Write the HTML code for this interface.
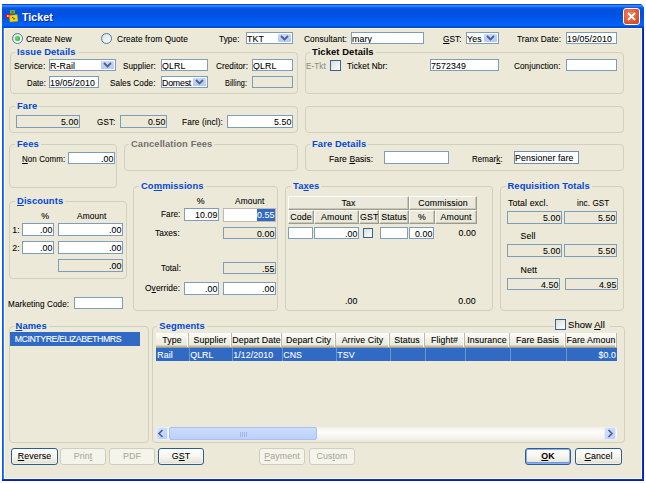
<!DOCTYPE html>
<html><head><meta charset="utf-8"><style>
html,body{margin:0;padding:0;background:#fff;width:646px;height:483px;overflow:hidden}
body{position:relative;font-family:"Liberation Sans",sans-serif;font-size:8.8px;color:#000;letter-spacing:0.1px;-webkit-text-stroke:0.08px currentColor}
u{text-decoration:underline;text-underline-offset:1px}
.win{position:absolute;left:2px;top:4px;width:642px;height:477px;background:#0a5cf0;border-radius:1px 5px 0 0}
.title{position:absolute;left:0;top:0;width:642px;height:24px;border-radius:1px 5px 0 0;
 background:linear-gradient(#0a48d2 0px,#0a48d2 0.8px,#3d8ef9 1px,#2a7cf6 2.5px,#0d62ee 3.5px,#0152e0 5px,#0050df 9px,#0056e8 14px,#005df2 18px,#0064fa 21px,#0060f6 22px,#0044cc 23px,#0a48d4 24px)}
.client{position:absolute;left:2px;top:24px;width:638px;height:451px;background:#ece9d8;box-shadow:inset 1px 0 #fffbf0,inset 0 -1px #fff8e4,inset -1px 0 #fff8e4,inset 0 1px #fbf6e2}
.lbord{position:absolute;left:0;top:24px;width:2px;height:453px;background:linear-gradient(90deg,#0a4ee0,#1d6cf7 60%,#5e97f5)}
.rbord{position:absolute;left:640px;top:24px;width:2px;height:453px;background:linear-gradient(90deg,#0a3ed0,#0018a0)}
.bbord{position:absolute;left:0;top:475px;width:642px;height:2px;background:linear-gradient(#0a40d2,#0018a0)}
.ttl{position:absolute;left:20px;top:7px;font-weight:bold;font-size:10.5px;color:#fff;text-shadow:1px 1px #0a1e8c}
.close{position:absolute;left:621px;top:4px;width:14.5px;height:14.5px;border:1px solid #fff;border-radius:3px;
 background:radial-gradient(circle at 40% 35%,#f08a6a,#e0562c 60%,#c9401a)}
.t{position:absolute;white-space:nowrap;line-height:11px}
.lg{position:absolute;white-space:nowrap;line-height:11px;font-weight:bold;font-size:9.4px;background:#ece9d8;padding:0 2px;-webkit-text-stroke:0;}
.grp{position:absolute;box-sizing:border-box;border:1px solid #d0d0bf;border-radius:4px}
.inp{position:absolute;box-sizing:border-box;border:1px solid #7f9db9;background:#fff;overflow:hidden}
.inp.dis{background:#ece9d8}
.inp.foc{border-color:#6a8bb3}
.v{position:absolute;top:calc(50% + 0.6px);transform:translateY(-50%);line-height:11px;white-space:nowrap}
.v.left{left:0px}
.v.right{right:0.6px}
.sel{background:#316ac5;color:#fff;padding-left:1px}
.inp.foc2{border:0}
.inp.foc2 .v{top:1px;bottom:1px;transform:none;right:1.5px}
.inp.foc2 .sel{display:block;height:100%;line-height:12px;width:17px;overflow:hidden;text-align:right;direction:rtl}
.cb .dd{position:absolute;right:1px;top:1px;bottom:1px;width:13px;background:linear-gradient(#c8d8fc,#b4c8f8);border-radius:1px;display:flex;align-items:center;justify-content:center}
.chk{position:absolute;box-sizing:border-box;border:1px solid #33649a;background:linear-gradient(135deg,#dcdcd7,#fff)}
.rad{position:absolute;width:11px;height:11px;box-sizing:border-box;border:1px solid #4d7aa8;border-radius:50%;background:linear-gradient(135deg,#dcdcd7,#fff)}
.rad .dot{position:absolute;left:2px;top:2px;width:5px;height:5px;border-radius:50%;background:radial-gradient(circle at 40% 40%,#6fe06f,#21a121)}
.hd{position:absolute;box-sizing:border-box;background:#ebe9db;border-top:1px solid #fff;border-left:1px solid #fff;border-right:1px solid #9d9b8e;border-bottom:1px solid #9d9b8e;box-shadow:inset -1px -1px #cbc8b8;text-align:center;line-height:12.5px;white-space:nowrap;overflow:hidden}
.lh{position:absolute;box-sizing:border-box;background:linear-gradient(#fdfdf9,#f1f0e6 50%,#ebe9dc);border-right:1px solid #bdbaa6;border-bottom:1px solid #a19e8b;box-shadow:inset -1px 0 #fff, inset 0 -1px #bdb9a6, inset 0 -2px #d6d3c1;text-align:center;line-height:14px;white-space:nowrap;overflow:hidden}
.selrow{position:absolute;background:#316ac5;color:#fff;white-space:nowrap;line-height:11px}
.cell{position:absolute;color:#fff;line-height:14px;white-space:nowrap}
.gl{position:absolute;width:1px;background:#6f93d2}
.sbtrack{position:absolute;background:linear-gradient(#f3f1ec,#fefefb 40%,#f0efe7)}
.sbbtn{position:absolute;box-sizing:border-box;background:linear-gradient(135deg,#d6e2fd,#b8cdf9);border:1px solid #e6eefc;border-radius:2px}
.sbthumb{position:absolute;box-sizing:border-box;background:linear-gradient(#cddcfd,#bcd0fa);border:1px solid #a9c0f2;border-radius:2px}
.btn{position:absolute;box-sizing:border-box;border:1px solid #2d5d8e;border-radius:3px;background:linear-gradient(#fff,#f6f5ee 50%,#e9e7dc 85%,#d8d4c4);box-shadow:inset 0 0 0 1px rgba(255,255,255,0.6);text-align:center;line-height:14.5px;white-space:nowrap}
.btn.dis{border-color:#cfcdbf;color:#aca899;background:#f5f4ea;box-shadow:none}
</style></head><body>
<div class="win">
 <div class="title"></div>
 <svg style="position:absolute;left:3px;top:6px" width="14" height="13" viewBox="0 0 14 13">
  <rect x="5" y="0" width="5" height="3.6" fill="#5cb83a"/><circle cx="7.6" cy="1.8" r="0.9" fill="#d02020"/>
  <rect x="0.5" y="3.9" width="6" height="4.6" fill="#d8141e"/><rect x="2" y="5" width="1.6" height="2" fill="#f4d0d0"/>
  <g transform="rotate(-6 8.5 8.3)"><rect x="4.6" y="5" width="8" height="6.6" fill="#ffd800" stroke="#b89a00" stroke-width="0.4"/><path d="M7 7.5h1.5 M8 9h2" stroke="#333" stroke-width="1"/></g>
 </svg>
 <div class="ttl">Ticket</div>
 <div class="close"><svg width="15" height="15" viewBox="0 0 15 15" style="position:absolute;left:0;top:0"><path d="M4 4 L11 11 M11 4 L4 11" stroke="#fff" stroke-width="1.8"/></svg></div>
 <div class="lbord"></div><div class="rbord"></div><div class="bbord"></div>
 <div class="client"></div>
</div>
<div class="rad" style="left:12px;top:33px"><div class="dot"></div></div>
<div class="t " id="L1" style="top:34px;left:26.4px;transform-origin:0 0;transform:scaleX(0.9618);"><span>Create New</span></div>
<div class="rad" style="left:101px;top:33px"></div>
<div class="t " id="L2" style="top:34px;left:116.79px;transform-origin:0 0;transform:scaleX(0.9515);"><span>Create from Quote</span></div>
<div class="t " id="L3" style="top:34px;left:219.49px;transform-origin:0 0;transform:scaleX(0.9334);"><span>Type:</span></div>
<div class="inp cb" style="left:246px;top:32px;width:47px;height:12px;"><span class="v left">TKT</span><div class="dd"><svg width="9" height="6" viewBox="0 0 9 6"><path d="M1 1 L4.5 4.5 L8 1" stroke="#4d6185" stroke-width="1.8" fill="none"/></svg></div></div>
<div class="t " id="L4" style="top:34px;left:303.79px;transform-origin:0 0;transform:scaleX(0.9422);"><span>Consultant:</span></div>
<div class="inp" style="left:351px;top:32px;width:73px;height:12px;"><span class="v left">mary</span></div>
<div class="t " id="L5" style="top:34px;left:442.65px;transform-origin:0 0;transform:scaleX(0.9319);"><span><u>G</u>ST:</span></div>
<div class="inp cb" style="left:466px;top:32px;width:33px;height:12px;"><span class="v left">Yes</span><div class="dd"><svg width="9" height="6" viewBox="0 0 9 6"><path d="M1 1 L4.5 4.5 L8 1" stroke="#4d6185" stroke-width="1.8" fill="none"/></svg></div></div>
<div class="t " id="L6" style="top:34px;left:516.79px;transform-origin:0 0;transform:scaleX(0.9435);"><span>Tranx Date:</span></div>
<div class="inp" style="left:566px;top:32px;width:51px;height:12px;"><span class="v left">19/05/2010</span></div>
<div class="grp" style="left:10px;top:52px;width:288px;height:42px;"></div>
<div class="lg" style="left:15px;top:46.4px;color:#0046d5">Issue Details</div>
<div class="t " id="L7" style="top:60.7px;left:14.2px;transform-origin:0 0;transform:scaleX(0.9625);"><span>Service:</span></div>
<div class="inp cb" style="left:49px;top:59px;width:67px;height:12px;"><span class="v left">R-Rail</span><div class="dd"><svg width="9" height="6" viewBox="0 0 9 6"><path d="M1 1 L4.5 4.5 L8 1" stroke="#4d6185" stroke-width="1.8" fill="none"/></svg></div></div>
<div class="t " id="L8" style="top:60.7px;left:123.49px;transform-origin:0 0;transform:scaleX(0.9201);"><span>Supplier:</span></div>
<div class="inp" style="left:161px;top:59px;width:47px;height:12px;"><span class="v left">QLRL</span></div>
<div class="t " id="L9" style="top:60.7px;left:215.79px;transform-origin:0 0;transform:scaleX(0.9236);"><span>Creditor:</span></div>
<div class="inp" style="left:252px;top:59px;width:41px;height:12px;"><span class="v left">QLRL</span></div>
<div class="t " id="L10" style="top:77.9px;left:26.78px;transform-origin:0 0;transform:scaleX(0.8764);"><span>Date:</span></div>
<div class="inp" style="left:49px;top:76px;width:50px;height:12px;"><span class="v left">19/05/2010</span></div>
<div class="t " id="L11" style="top:77.9px;left:110.43px;transform-origin:0 0;transform:scaleX(0.9294);"><span>Sales Code:</span></div>
<div class="inp cb" style="left:161px;top:76px;width:47px;height:12px;"><span class="v left"><span style="letter-spacing:-0.2px">Domest</span></span><div class="dd"><svg width="9" height="6" viewBox="0 0 9 6"><path d="M1 1 L4.5 4.5 L8 1" stroke="#4d6185" stroke-width="1.8" fill="none"/></svg></div></div>
<div class="t " id="L12" style="top:77.9px;left:224.78px;transform-origin:0 0;transform:scaleX(0.8241);"><span>Billing:</span></div>
<div class="inp dis" style="left:252px;top:76px;width:41px;height:12px;"><span class="v right"></span></div>
<div class="grp" style="left:305px;top:52px;width:319px;height:42px;"></div>
<div class="lg" style="left:310px;top:46.4px;color:#000">Ticket Details</div>
<div class="t " id="L13" style="top:60.7px;left:305.88px;transform-origin:0 0;transform:scaleX(0.9201);color:#8d8c84;"><span>E-Tkt</span></div>
<div class="chk" style="left:330px;top:59.5px;width:11px;height:11px"></div>
<div class="t " id="L14" style="top:60.7px;left:347.02px;transform-origin:0 0;transform:scaleX(0.9381);"><span>Ticket Nbr:</span></div>
<div class="inp" style="left:430px;top:59px;width:69px;height:12px;"><span class="v left">7572349</span></div>
<div class="t " id="L15" style="top:60.7px;left:513.79px;transform-origin:0 0;transform:scaleX(0.9280);"><span>Conjunction:</span></div>
<div class="inp" style="left:566px;top:59px;width:51px;height:12px;"><span class="v left"></span></div>
<div class="grp" style="left:9px;top:106px;width:289px;height:27px;"></div>
<div class="lg" style="left:15px;top:100.4px;color:#0046d5">Fare</div>
<div class="inp dis" style="left:16px;top:115px;width:64px;height:13px;"><span class="v right">5.00</span></div>
<div class="t " id="L16" style="top:116.5px;left:96.79px;transform-origin:0 0;transform:scaleX(0.9201);"><span>GST:</span></div>
<div class="inp dis" style="left:120px;top:115px;width:47px;height:13px;"><span class="v right">0.50</span></div>
<div class="t " id="L17" style="top:116.5px;left:182.2px;transform-origin:0 0;transform:scaleX(0.9489);"><span>Fare (incl):</span></div>
<div class="inp" style="left:227px;top:115px;width:66px;height:13px;"><span class="v right">5.50</span></div>
<div class="grp" style="left:305px;top:106px;width:319px;height:27px;"></div>
<div class="grp" style="left:9px;top:144px;width:108px;height:44px;"></div>
<div class="lg" style="left:15px;top:138.4px;color:#0046d5">Fees</div>
<div class="t " id="L18" style="top:154.2px;left:21.75px;transform-origin:0 0;transform:scaleX(0.9031);"><span><u>N</u>on Comm:</span></div>
<div class="inp" style="left:68px;top:152px;width:47px;height:12px;"><span class="v right">.00</span></div>
<div class="grp" style="left:124px;top:144px;width:174px;height:27px;"></div>
<div class="lg" style="left:129px;top:138.4px;color:#707070">Cancellation Fees</div>
<div class="grp" style="left:305px;top:144px;width:319px;height:27px;"></div>
<div class="lg" style="left:310px;top:138.4px;color:#0046d5">Fare Details</div>
<div class="t " id="L19" style="top:153.6px;left:328.9px;transform-origin:0 0;transform:scaleX(0.9689);"><span>Fare <u>B</u>asis:</span></div>
<div class="inp" style="left:384px;top:151px;width:65px;height:13px;"><span class="v right"></span></div>
<div class="t " id="L20" style="top:153.6px;left:472.34px;transform-origin:0 0;transform:scaleX(0.9030);"><span>Remar<u>k</u>:</span></div>
<div class="inp foc" style="left:514px;top:151px;width:65px;height:13px;"><span class="v left">Pensioner fare</span></div>
<div class="grp" style="left:9px;top:201px;width:118px;height:78px;"></div>
<div class="lg" style="left:15px;top:195.4px;color:#0046d5"><u>D</u>iscounts</div>
<div class="t " style="top:211.2px;left:-150.8px;width:200px;text-align:right;"><span>%</span></div>
<div class="t " id="L21" style="top:211.2px;left:76.79px;transform-origin:0 0;transform:scaleX(0.9484);"><span>Amount</span></div>
<div class="t " style="top:224.5px;left:-180.2px;width:200px;text-align:right;"><span>1:</span></div>
<div class="inp" style="left:22px;top:223px;width:32px;height:13px;"><span class="v right">.00</span></div>
<div class="inp" style="left:58px;top:223px;width:65px;height:13px;"><span class="v right">.00</span></div>
<div class="t " style="top:242.5px;left:-180.2px;width:200px;text-align:right;"><span>2:</span></div>
<div class="inp" style="left:22px;top:241px;width:32px;height:13px;"><span class="v right">.00</span></div>
<div class="inp" style="left:58px;top:241px;width:65px;height:13px;"><span class="v right">.00</span></div>
<div class="inp dis" style="left:58px;top:259px;width:65px;height:13px;"><span class="v right">.00</span></div>
<div class="t " id="L22" style="top:298.7px;left:8.46px;transform-origin:0 0;transform:scaleX(0.9256);"><span>Marketing Code:</span></div>
<div class="inp" style="left:74px;top:297px;width:49px;height:12px;"><span class="v right"></span></div>
<div class="grp" style="left:133px;top:186px;width:145px;height:125px;"></div>
<div class="lg" style="left:139px;top:180.4px;color:#0046d5">Co<u>m</u>missions</div>
<div class="t " style="top:195.7px;left:4.7px;width:200px;text-align:right;"><span>%</span></div>
<div class="t " id="L23" style="top:195.7px;left:234.79px;transform-origin:0 0;transform:scaleX(0.9484);"><span>Amount</span></div>
<div class="t " id="L24" style="top:209px;left:160.79px;transform-origin:0 0;transform:scaleX(0.9239);"><span>Fare:</span></div>
<div class="inp" style="left:184px;top:208px;width:35px;height:13px;"><span class="v right">10.09</span></div>
<div class="inp foc2" style="left:223px;top:208px;width:53px;height:14px"><span class="v right"><span class="sel">0.55</span></span><svg style="position:absolute;left:0;top:0" width="53" height="14"><rect x="0.5" y="0.5" width="52" height="13" fill="none" stroke="#7d7562" stroke-dasharray="1 1"/></svg></div>
<div class="t " id="L25" style="top:227.7px;left:154.61px;transform-origin:0 0;transform:scaleX(0.9539);"><span>Taxes:</span></div>
<div class="inp dis" style="left:223px;top:227px;width:53px;height:12px;"><span class="v right">0.00</span></div>
<div class="t " id="L26" style="top:263px;left:160.79px;transform-origin:0 0;transform:scaleX(0.9239);"><span>Total:</span></div>
<div class="inp dis" style="left:223px;top:262px;width:53px;height:12px;"><span class="v right">.55</span></div>
<div class="t " id="L27" style="top:283.4px;left:144.61px;transform-origin:0 0;transform:scaleX(0.9501);"><span>O<u>v</u>erride:</span></div>
<div class="inp" style="left:184px;top:282px;width:35px;height:13px;"><span class="v right">.00</span></div>
<div class="inp" style="left:223px;top:282px;width:53px;height:13px;"><span class="v right">.00</span></div>
<div class="grp" style="left:285px;top:186px;width:208px;height:125px;"></div>
<div class="lg" style="left:291px;top:180.4px;color:#0046d5">Ta<u>x</u>es</div>
<div class="hd" style="left:288px;top:196px;width:121px;height:14px">Tax</div>
<div class="hd" style="left:409px;top:196px;width:68px;height:14px">Commission</div>
<div class="hd" style="left:288px;top:210px;width:26px;height:14px">Code</div>
<div class="hd" style="left:314px;top:210px;width:45px;height:14px">Amount</div>
<div class="hd" style="left:359px;top:210px;width:20px;height:14px">GST</div>
<div class="hd" style="left:379px;top:210px;width:30px;height:14px">Status</div>
<div class="hd" style="left:409px;top:210px;width:26px;height:14px">%</div>
<div class="hd" style="left:435px;top:210px;width:42px;height:14px">Amount</div>
<div class="inp" style="left:288px;top:227px;width:25px;height:12px;"><span class="v right"></span></div>
<div class="inp" style="left:314px;top:227px;width:45px;height:12px;"><span class="v right">.00</span></div>
<div class="chk" style="left:363px;top:228px;width:10px;height:10px"></div>
<div class="inp" style="left:380px;top:227px;width:28px;height:12px;"><span class="v right"></span></div>
<div class="inp" style="left:409px;top:227px;width:25px;height:12px;border-color:#7f9db9;"><span class="v right">0.00</span></div>
<div class="t " style="top:228.2px;left:276px;width:200px;text-align:right;"><span>0.00</span></div>
<div class="t " style="top:295.9px;left:157.5px;width:200px;text-align:right;"><span>.00</span></div>
<div class="t " style="top:295.9px;left:275.7px;width:200px;text-align:right;"><span>0.00</span></div>
<div class="grp" style="left:500px;top:186px;width:124px;height:125px;"></div>
<div class="lg" style="left:505.5px;top:180.4px;color:#0046d5">Requisition Totals</div>
<div class="t " id="L28" style="top:197.8px;left:507.97px;transform-origin:0 0;transform:scaleX(1.0002);"><span>Total excl.</span></div>
<div class="t " id="L29" style="top:197.8px;left:577.29px;transform-origin:0 0;transform:scaleX(0.9250);"><span>inc. GST</span></div>
<div class="inp dis" style="left:507px;top:211px;width:55px;height:13px;"><span class="v right">5.00</span></div>
<div class="inp dis" style="left:564px;top:211px;width:53px;height:13px;"><span class="v right">5.50</span></div>
<div class="t " style="top:230.9px;left:520.6px;"><span>Sell</span></div>
<div class="inp dis" style="left:507px;top:244px;width:55px;height:13px;"><span class="v right">5.00</span></div>
<div class="inp dis" style="left:564px;top:244px;width:53px;height:13px;"><span class="v right">5.50</span></div>
<div class="t " style="top:264.8px;left:520.6px;"><span>Nett</span></div>
<div class="inp dis" style="left:507px;top:278px;width:53px;height:12px;"><span class="v right">4.50</span></div>
<div class="inp dis" style="left:565px;top:278px;width:53px;height:12px;"><span class="v right">4.95</span></div>
<div class="grp" style="left:9px;top:326px;width:140px;height:117px;"></div>
<div class="lg" style="left:13.5px;top:320.4px;color:#0046d5"><u>N</u>ames</div>
<div class="selrow" style="left:10px;top:332px;width:130px;height:14px"><span style="position:absolute;left:4.7px;top:1.8px;letter-spacing:-0.45px">MCINTYRE/ELIZABETHMRS</span></div>
<div class="grp" style="left:152px;top:326px;width:473px;height:117px;"></div>
<div class="lg" style="left:157.3px;top:320.4px;color:#0046d5">Segments</div>
<div style="position:absolute;left:554px;top:318px;width:56px;height:13px;background:#ece9d8"></div>
<div class="chk" style="left:555px;top:319px;width:11px;height:11px"></div>
<div class="t " id="L30" style="top:319.5px;left:567.79px;transform-origin:0 0;transform:scaleX(1.0706);"><span>Show <u>A</u>ll</span></div>
<div class="lh" style="left:156px;top:333px;width:33px;height:15px">Type</div>
<div class="lh" style="left:189px;top:333px;width:43px;height:15px">Supplier</div>
<div class="lh" style="left:232px;top:333px;width:50px;height:15px">Depart Date</div>
<div class="lh" style="left:282px;top:333px;width:54px;height:15px">Depart City</div>
<div class="lh" style="left:336px;top:333px;width:54px;height:15px">Arrive City</div>
<div class="lh" style="left:390px;top:333px;width:35px;height:15px">Status</div>
<div class="lh" style="left:425px;top:333px;width:40px;height:15px">Flight#</div>
<div class="lh" style="left:465px;top:333px;width:45px;height:15px">Insurance</div>
<div class="lh" style="left:510px;top:333px;width:56px;height:15px">Fare Basis</div>
<div class="lh" style="left:566px;top:333px;width:51px;height:15px">Fare Amoun</div>
<div class="selrow" style="left:156px;top:348px;width:461px;height:13px"></div>
<div class="cell" style="left:157.2px;top:348px">Rail</div>
<div class="cell" style="left:190.2px;top:348px">QLRL</div>
<div class="cell" style="left:233.2px;top:348px">1/12/2010</div>
<div class="cell" style="left:283.2px;top:348px">CNS</div>
<div class="cell" style="left:337.2px;top:348px">TSV</div>
<div class="gl" style="left:189px;top:348px;height:13px"></div>
<div class="gl" style="left:232px;top:348px;height:13px"></div>
<div class="gl" style="left:282px;top:348px;height:13px"></div>
<div class="gl" style="left:336px;top:348px;height:13px"></div>
<div class="gl" style="left:390px;top:348px;height:13px"></div>
<div class="gl" style="left:425px;top:348px;height:13px"></div>
<div class="gl" style="left:465px;top:348px;height:13px"></div>
<div class="gl" style="left:510px;top:348px;height:13px"></div>
<div class="gl" style="left:566px;top:348px;height:13px"></div>
<div class="cell" style="left:566px;width:50px;text-align:right;top:348px">$0.0</div>
<div class="sbtrack" style="left:156px;top:427px;width:461px;height:13px"></div>
<div class="sbbtn" style="left:156px;top:427px;width:12px;height:13px"><svg width="12" height="13" viewBox="0 0 12 13" style="position:absolute;left:-1px;top:-1px"><path d="M6.5 3 L3 6.5 L6.5 10" stroke="#4d6185" stroke-width="1.6" fill="none"/></svg></div>
<div class="sbthumb" style="left:169px;top:427px;width:148px;height:13px"><svg width="148" height="13" viewBox="0 0 148 13"><path d="M70.5 4v5 M72.5 4v5 M74.5 4v5 M76.5 4v5" stroke="#9fb6ec" stroke-width="1" fill="none"/></svg></div>
<div class="sbbtn" style="left:604px;top:427px;width:12px;height:13px"><svg width="12" height="13" viewBox="0 0 12 13" style="position:absolute;left:-1px;top:-1px"><path d="M4.5 3 L8 6.5 L4.5 10" stroke="#4d6185" stroke-width="1.6" fill="none"/></svg></div>
<div class="btn" style="left:11px;top:448px;width:47px;height:17px;"><u>R</u>everse</div>
<div class="btn dis" style="left:60px;top:448px;width:46px;height:17px;">Prin<u>t</u></div>
<div class="btn dis" style="left:109px;top:448px;width:46px;height:17px;">PDF</div>
<div class="btn" style="left:158px;top:448px;width:46px;height:17px;">G<u>S</u>T</div>
<div class="btn dis" style="left:259px;top:448px;width:46px;height:17px;"><u>P</u>ayment</div>
<div class="btn dis" style="left:309px;top:448px;width:46px;height:17px;">Cus<u>t</u>om</div>
<div class="btn" style="left:525px;top:448px;width:46px;height:17px;font-weight:bold;box-shadow:inset 0 0 0 1px #8cb0ee, inset 0 -1px 0 1px #6d97e0;"><u>O</u>K</div>
<div class="btn" style="left:575px;top:448px;width:47px;height:17px;"><u>C</u>ancel</div>
</body></html>
